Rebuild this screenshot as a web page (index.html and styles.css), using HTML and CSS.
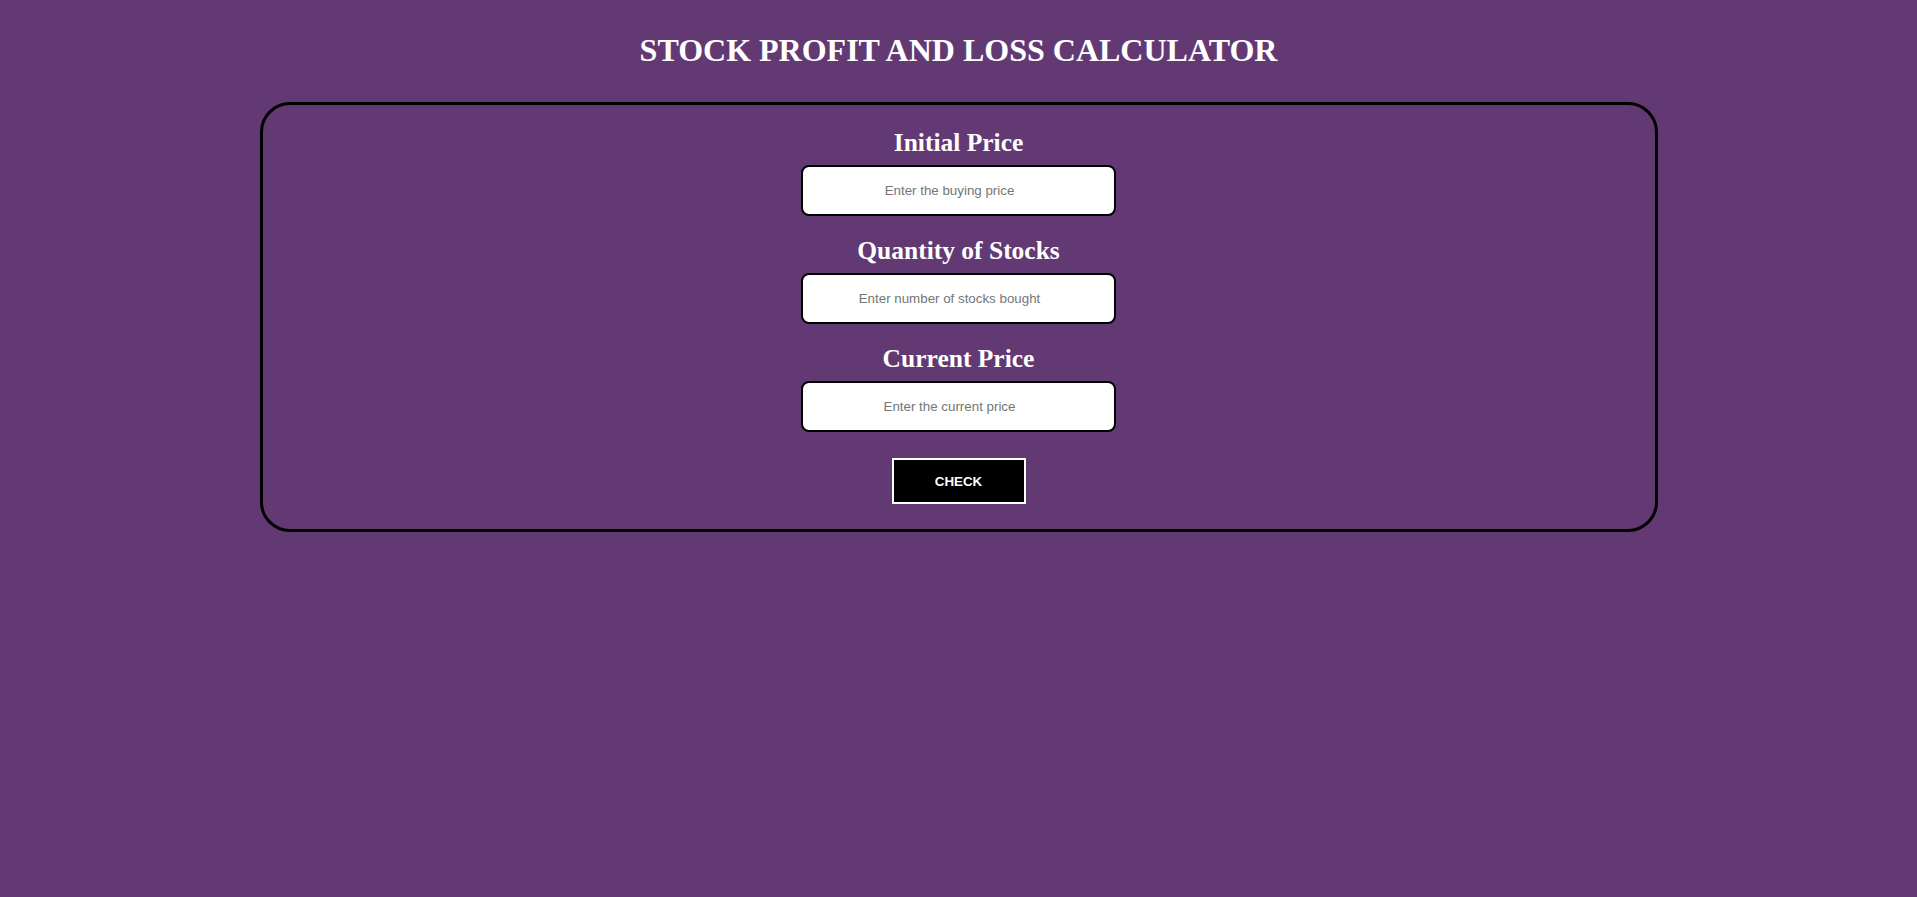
FILE: index.html
```html
<!DOCTYPE html>
<html lang="en">
<head>
<meta charset="utf-8">
<title>Stock Profit and Loss Calculator</title>
<link rel="stylesheet" href="styles.css">
</head>
<body>
<h1 class="title">STOCK PROFIT AND LOSS CALCULATOR</h1>
<div class="card">
  <label class="label" for="initial">Initial Price</label>
  <input class="field" id="initial" type="number" placeholder="Enter the buying price">
  <label class="label" for="qty">Quantity of Stocks</label>
  <input class="field" id="qty" type="number" placeholder="Enter number of stocks bought">
  <label class="label" for="current">Current Price</label>
  <input class="field" id="current" type="number" placeholder="Enter the current price">
  <button class="btn" type="button">CHECK</button>
</div>
</body>
</html>
```
FILE: styles.css
```css
html, body {
  margin: 0;
  padding: 0;
  background: #633974;
}
body {
  font-family: "Liberation Serif", "Times New Roman", serif;
  color: #ffffff;
  padding-top: 32px;
}
.title {
  margin: 0;
  font-size: 32px;
  line-height: 37px;
  font-weight: bold;
  text-align: center;
}
.card {
  box-sizing: border-box;
  width: 1398px;
  margin: 33px auto 0;
  border: 3px solid #000;
  border-radius: 30px;
  padding: 22px 0 25px;
  display: flex;
  flex-direction: column;
  align-items: center;
}
.label {
  display: block;
  font-size: 25.5px;
  line-height: 28px;
  font-weight: bold;
  margin-top: 2px;
  margin-bottom: 8px;
}
.field {
  box-sizing: border-box;
  width: 315px;
  height: 51px;
  border: 2px solid #000;
  border-radius: 8px;
  background: #fff;
  font-family: "Liberation Sans", Arial, sans-serif;
  font-size: 13.33px;
  text-align: center;
  padding: 0 3px 0 0;
  margin-bottom: 19px;
  outline: none;
}
.field::placeholder {
  color: #757575;
}
.field:last-of-type {
  margin-bottom: 26px;
}
.btn {
  box-sizing: border-box;
  width: 134px;
  height: 46px;
  background: #000;
  color: #fff;
  border: 2px solid #fff;
  font-family: "Liberation Sans", Arial, sans-serif;
  font-size: 13.33px;
  font-weight: bold;
  padding: 0;
  cursor: pointer;
}
```
